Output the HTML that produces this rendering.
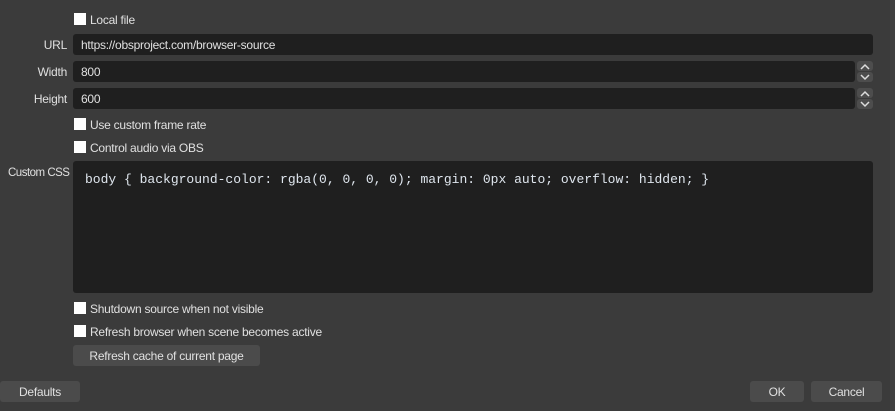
<!DOCTYPE html><html><head><style>
body{margin:0;width:895px;height:411px;background:#3b3b3b;font-family:"Liberation Sans",sans-serif;font-size:12px;letter-spacing:-0.25px;color:#e0e0e0;position:relative;overflow:hidden}
div{position:absolute;box-sizing:border-box}
.cb{width:12px;height:12px;background:#fff;left:74px}
.t{white-space:nowrap}
.in{background:#1f1f1f;border-radius:3px;left:73px;padding-left:8px;line-height:21px;height:21px}
.lb{right:828px;text-align:right}
.btn{background:#4b4b4b;border-radius:3px;text-align:center;line-height:21px;height:21px}
.sp{left:857px;width:16px;height:10px;background:#4d4d4d;border-radius:3px}
</style></head><body>
<div style="right:0;top:0;width:5px;height:411px;background:#404040"></div>
<div class="cb" style="top:13px"></div><div class="t" style="left:90px;top:13px">Local file</div>
<div class="t lb" style="top:38px">URL</div>
<div class="in" style="top:34px;width:800px;padding-top:1px">https://obsproject.com/browser-source</div>
<div class="t lb" style="top:65px">Width</div>
<div class="in" style="top:61px;width:782px;padding-top:1px">800</div>
<div class="sp" style="top:61px"></div><div class="sp" style="top:72px"></div>
<div class="t lb" style="top:92px">Height</div>
<div class="in" style="top:88px;width:782px;padding-top:1px">600</div>
<div class="sp" style="top:88px"></div><div class="sp" style="top:99px"></div>
<svg style="position:absolute;left:857px;top:61px" width="16" height="48" fill="none" stroke="#ddd" stroke-width="1.5"><path d="M4 8l4-4 4 4M4 14l4 4 4-4M4 35l4-4 4 4M4 41l4 4 4-4"/></svg>
<div class="cb" style="top:118px"></div><div class="t" style="left:90px;top:118px">Use custom frame rate</div>
<div class="cb" style="top:141px"></div><div class="t" style="left:90px;top:141px">Control audio via OBS</div>
<div class="t" style="left:8px;top:167px;font-size:11.5px;letter-spacing:-0.5px">Custom CSS</div>
<div style="left:73px;top:161px;width:800px;height:132px;background:#1f1f1f;border-radius:3px;padding:11px 12px;font-family:'Liberation Mono',monospace;font-size:13px;letter-spacing:0;white-space:nowrap;color:#dfe6ee">body { background-color: rgba(0, 0, 0, 0); margin: 0px auto; overflow: hidden; }</div>
<div class="cb" style="top:302px"></div><div class="t" style="left:90px;top:302px">Shutdown source when not visible</div>
<div class="cb" style="top:325px"></div><div class="t" style="left:90px;top:325px">Refresh browser when scene becomes active</div>
<div class="btn" style="left:73px;top:345px;width:187px;padding-top:1px">Refresh cache of current page</div>
<div class="btn" style="left:0;top:381px;width:80px;padding-top:1px">Defaults</div>
<div class="btn" style="left:750px;top:381px;width:54px;padding-top:1px">OK</div>
<div class="btn" style="left:811px;top:381px;width:71px;padding-top:1px">Cancel</div>
</body></html>
